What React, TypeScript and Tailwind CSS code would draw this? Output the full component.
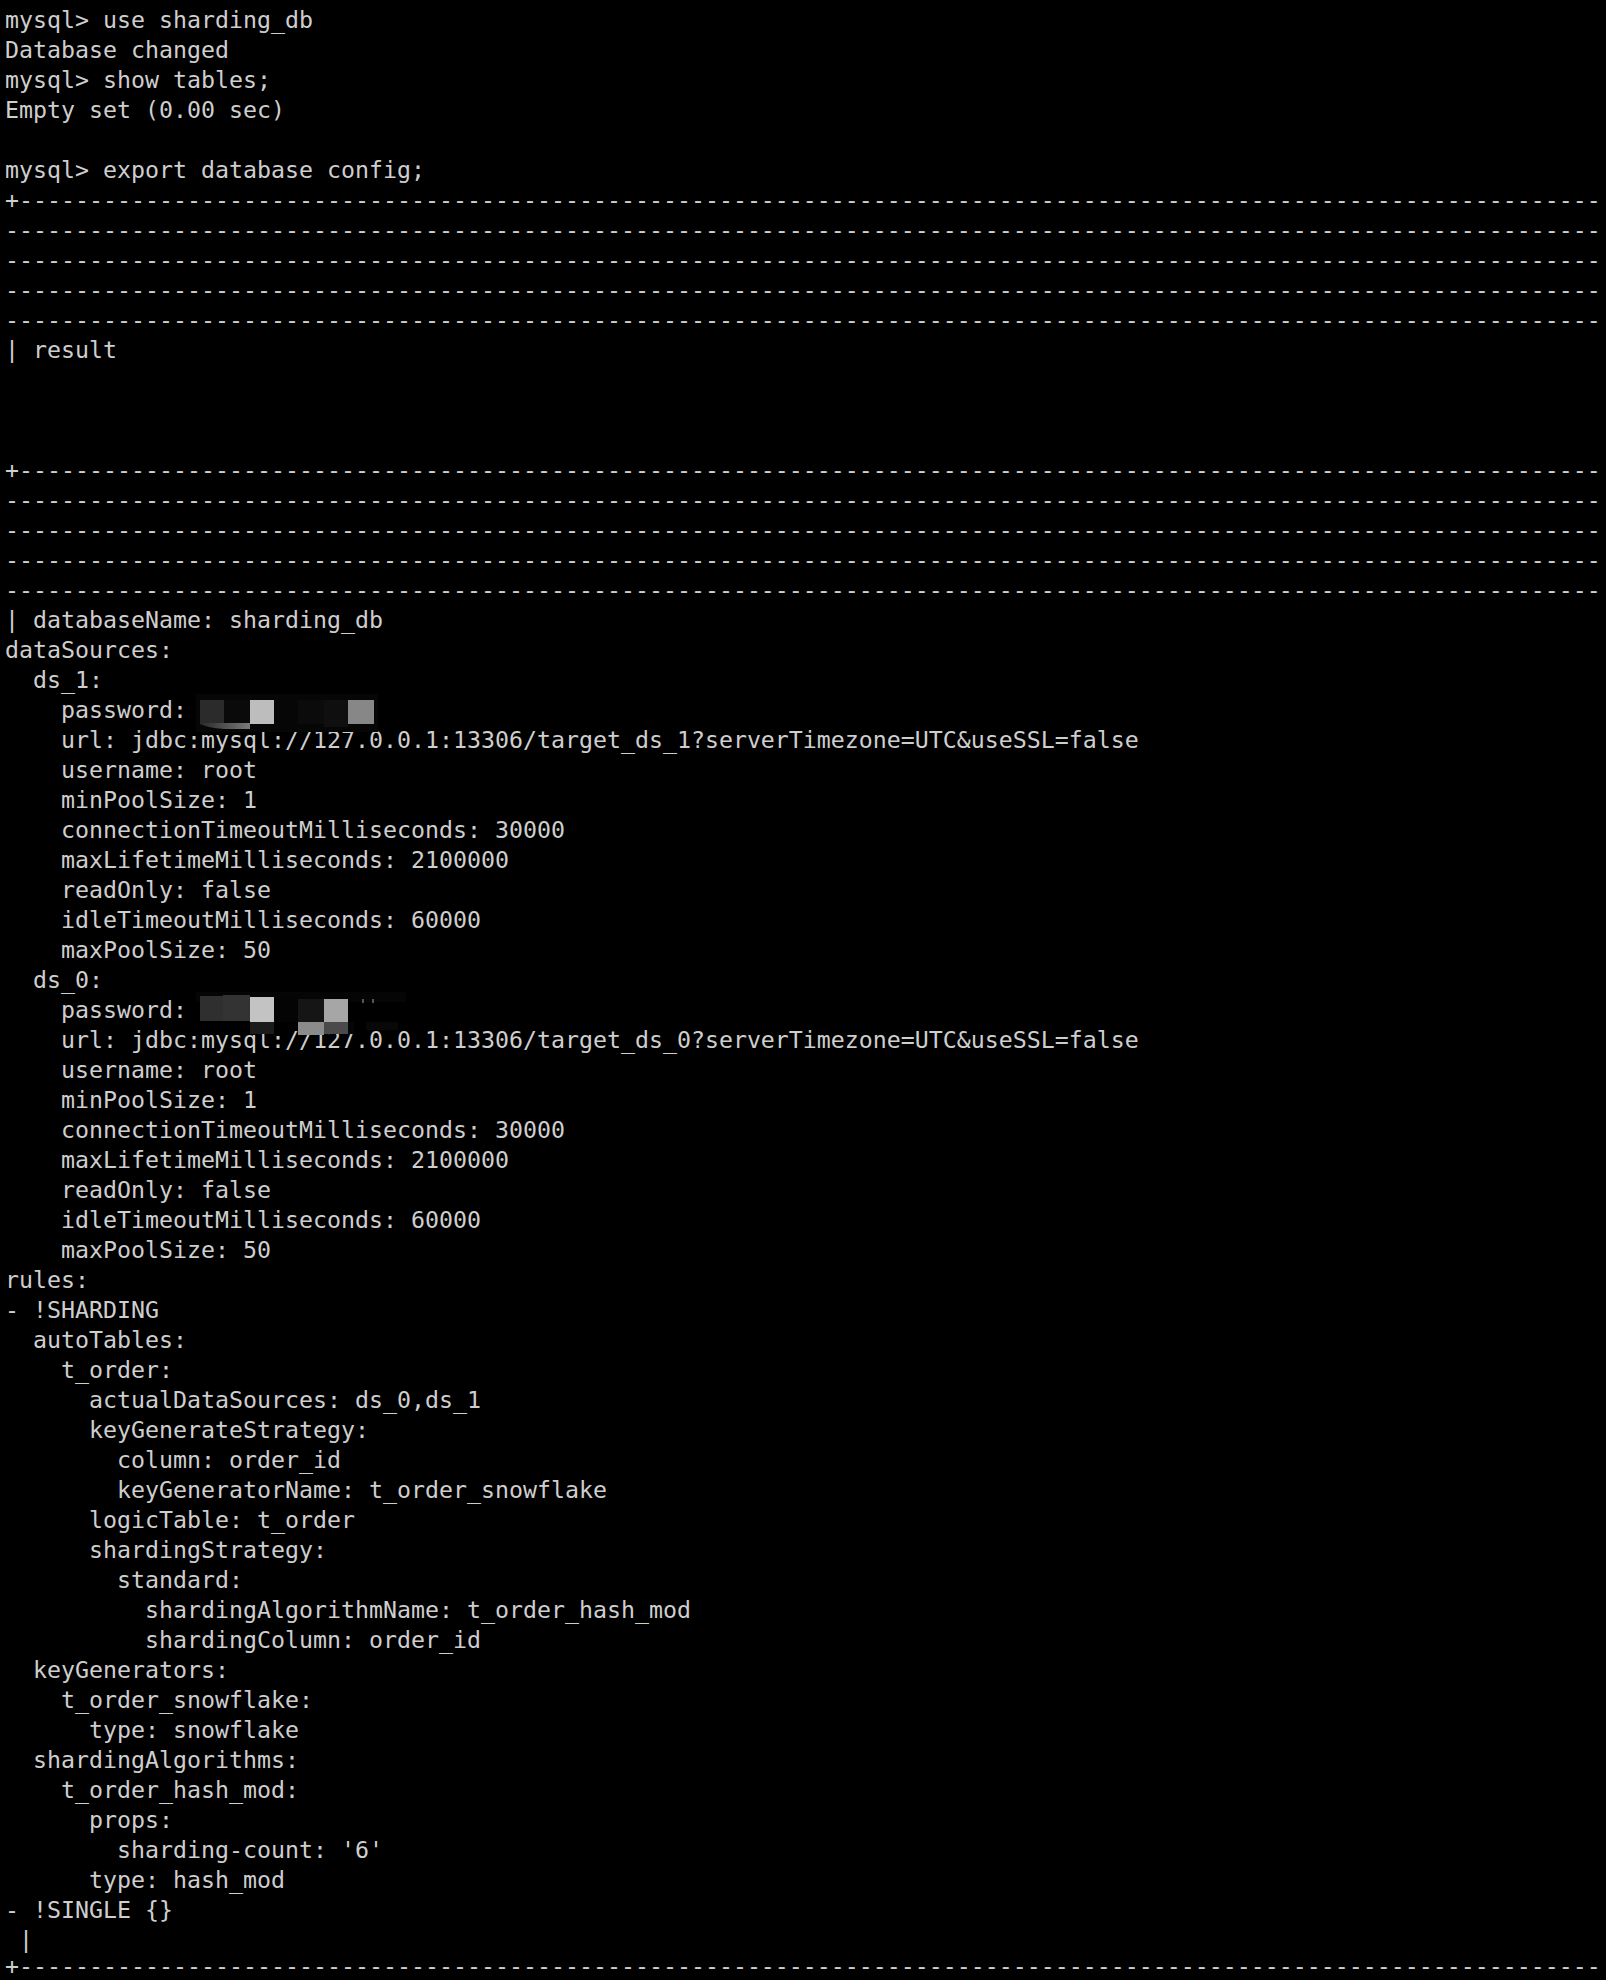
const COLS = 114;
const DASHES = "-".repeat(COLS);
const PLUS_ROW = "+" + "-".repeat(COLS - 1);

const dsLines = (name: string) => [
  `  ${name}:`,
  "    password: ",
  `    url: jdbc:mysql://127.0.0.1:13306/target_${name}?serverTimezone=UTC&useSSL=false`,
  "    username: root",
  "    minPoolSize: 1",
  "    connectionTimeoutMilliseconds: 30000",
  "    maxLifetimeMilliseconds: 2100000",
  "    readOnly: false",
  "    idleTimeoutMilliseconds: 60000",
  "    maxPoolSize: 50",
];

const lines: string[] = [
  "mysql> use sharding_db",
  "Database changed",
  "mysql> show tables;",
  "Empty set (0.00 sec)",
  "",
  "mysql> export database config;",
  PLUS_ROW,
  DASHES,
  DASHES,
  DASHES,
  DASHES,
  "| result",
  "",
  "",
  "",
  PLUS_ROW,
  DASHES,
  DASHES,
  DASHES,
  DASHES,
  "| databaseName: sharding_db",
  "dataSources:",
  ...dsLines("ds_1"),
  ...dsLines("ds_0"),
  "rules:",
  "- !SHARDING",
  "  autoTables:",
  "    t_order:",
  "      actualDataSources: ds_0,ds_1",
  "      keyGenerateStrategy:",
  "        column: order_id",
  "        keyGeneratorName: t_order_snowflake",
  "      logicTable: t_order",
  "      shardingStrategy:",
  "        standard:",
  "          shardingAlgorithmName: t_order_hash_mod",
  "          shardingColumn: order_id",
  "  keyGenerators:",
  "    t_order_snowflake:",
  "      type: snowflake",
  "  shardingAlgorithms:",
  "    t_order_hash_mod:",
  "      props:",
  "        sharding-count: '6'",
  "      type: hash_mod",
  "- !SINGLE {}",
  " |",
];

// pixelated password masks (left, top, width, height, colour)
type Block = [number, number, number, number, string];

const blocks: Block[] = [
  // ds_1 password
  [196, 694, 182, 38, "#060606"],
  [200, 700, 24, 24, "#2b2b2b"],
  [224, 700, 26, 24, "#0a0a0a"],
  [250, 700, 24, 24, "#bdbdbd"],
  [274, 700, 24, 24, "#060606"],
  [298, 700, 26, 24, "#0b0b0b"],
  [324, 700, 24, 27, "#0f0f0f"],
  [348, 700, 26, 24, "#878787"],
  // ds_0 password
  [196, 992, 210, 10, "#050505"],
  [200, 996, 23, 25, "#2f2f2f"],
  [223, 995, 27, 26, "#333333"],
  [250, 997, 24, 25, "#c3c3c3"],
  [274, 997, 24, 25, "#040404"],
  [298, 999, 26, 23, "#151515"],
  [324, 999, 24, 23, "#a6a6a6"],
  [250, 1022, 24, 12, "#1b1b1b"],
  [298, 1022, 26, 13, "#8b8b8b"],
  [324, 1022, 24, 12, "#4a4a4a"],
  [348, 1022, 6, 12, "#050505"],
  [366, 1022, 32, 8, "#080808"],
  [362, 999, 2, 4, "#555555"],
  [372, 999, 2, 4, "#555555"],
];

export default function App() {
  return (
    <div className="relative w-[1606px] h-[1980px] overflow-hidden bg-black">
      <div
        className="pl-[5px] pt-[5px] text-[23.25px] leading-[30px] text-[#cecece] whitespace-pre"
        style={{ fontFamily: '"DejaVu Sans Mono", "Liberation Mono", monospace' }}
      >
        {lines.map((line, i) => (
          <div key={i} className="h-[30px]">
            {line}
          </div>
        ))}
        {/* bottom border, the terminal ends here */}
        <div className="h-[25px] leading-[25px] pt-[0px] -mt-[0px]">
          <span className="relative top-[-2px]">{PLUS_ROW}</span>
        </div>
      </div>

      {blocks.map(([left, top, width, height, color], i) => (
        <div
          key={i}
          className="absolute"
          style={{ left, top, width, height, backgroundColor: color }}
        />
      ))}

      {/* smear under the first mask */}
      <svg className="absolute left-[200px] top-[722px]" width="52" height="8" viewBox="0 0 52 8">
        <defs>
          <linearGradient id="smear" x1="0" x2="1" y1="0" y2="0">
            <stop offset="0" stopColor="#2a2a2a" />
            <stop offset="1" stopColor="#7a7a7a" />
          </linearGradient>
        </defs>
        <path d="M0 1 L50 1 L50 7 L24 7 Q8 6 0 2 Z" fill="url(#smear)" />
      </svg>
    </div>
  );
}
